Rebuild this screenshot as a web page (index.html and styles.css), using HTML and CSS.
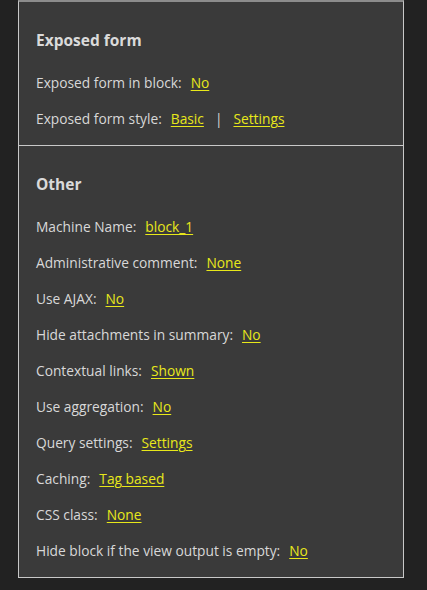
FILE: index.html
```html
<!DOCTYPE html>
<html>
<head>
<meta charset="utf-8">
<link rel="stylesheet" href="styles.css">
</head>
<body>
<div class="panel">
  <section class="section">
    <h3 class="heading">Exposed form</h3>
    <div class="row">Exposed form in block:<a class="link" href="#">No</a></div>
    <div class="row">Exposed form style:<a class="link" href="#">Basic</a><span class="sep">|</span><a class="link link-after" href="#">Settings</a></div>
  </section>
  <section class="section section-divided">
    <h3 class="heading">Other</h3>
    <div class="row">Machine Name:<a class="link" href="#">block_1</a></div>
    <div class="row">Administrative comment:<a class="link" href="#">None</a></div>
    <div class="row">Use AJAX:<a class="link" href="#">No</a></div>
    <div class="row">Hide attachments in summary:<a class="link" href="#">No</a></div>
    <div class="row">Contextual links:<a class="link" href="#">Shown</a></div>
    <div class="row">Use aggregation:<a class="link" href="#">No</a></div>
    <div class="row">Query settings:<a class="link" href="#">Settings</a></div>
    <div class="row">Caching:<a class="link" href="#">Tag based</a></div>
    <div class="row">CSS class:<a class="link" href="#">None</a></div>
    <div class="row">Hide block if the view output is empty:<a class="link" href="#">No</a></div>
  </section>
</div>
</body>
</html>
```

FILE: styles.css
```css
html, body {
  margin: 0;
  padding: 0;
  background: #222222;
}
body {
  font-family: "Open Sans", "Noto Sans", sans-serif;
  color: #d8d8d8;
  font-size: 13.75px;
}
.panel {
  margin-left: 18px;
  width: 384px;
  background: #3a3a3a;
  border: 1px solid #c8c8c8;
  border-top: 2px solid #8c8c8c;
}
.section {
  padding: 28px 17px 8px 17px;
}
.section-divided {
  border-top: 1px solid #c8c8c8;
}
.heading {
  margin: 0 0 15px 0;
  font-size: 15.5px;
  line-height: 20px;
  font-weight: bold;
  color: #dadada;
}
.row {
  height: 36px;
  line-height: 36px;
  white-space: nowrap;
}
.link {
  color: #e8e81a;
  text-decoration: underline;
  text-underline-offset: 2px;
  margin-left: 9px;
}
.sep {
  margin: 0 11px 0 11px;
  color: #d8d8d8;
}
.link-after {
  margin-left: 0;
}
```
